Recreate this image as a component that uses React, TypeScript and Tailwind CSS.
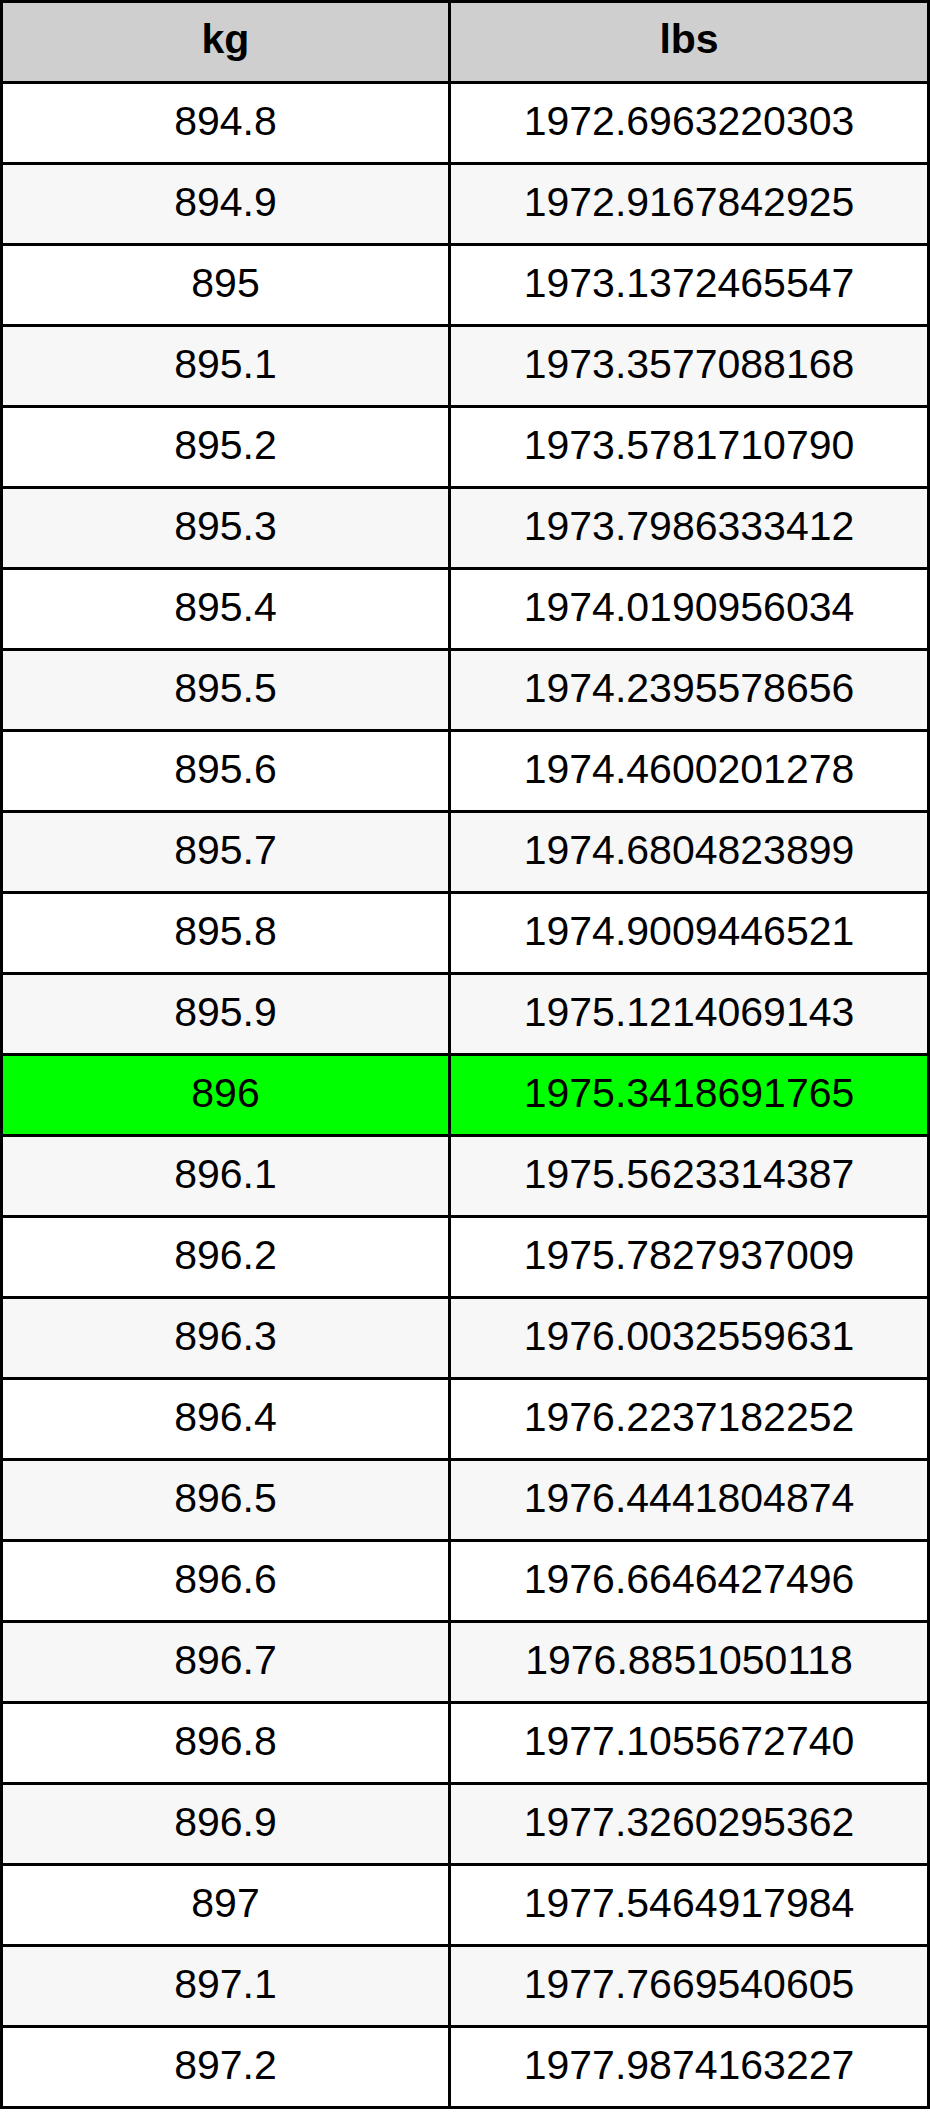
const rows: Array<[string, string]> = [
  ['894.8', '1972.6963220303'],
  ['894.9', '1972.9167842925'],
  ['895', '1973.1372465547'],
  ['895.1', '1973.3577088168'],
  ['895.2', '1973.5781710790'],
  ['895.3', '1973.7986333412'],
  ['895.4', '1974.0190956034'],
  ['895.5', '1974.2395578656'],
  ['895.6', '1974.4600201278'],
  ['895.7', '1974.6804823899'],
  ['895.8', '1974.9009446521'],
  ['895.9', '1975.1214069143'],
  ['896', '1975.3418691765'],
  ['896.1', '1975.5623314387'],
  ['896.2', '1975.7827937009'],
  ['896.3', '1976.0032559631'],
  ['896.4', '1976.2237182252'],
  ['896.5', '1976.4441804874'],
  ['896.6', '1976.6646427496'],
  ['896.7', '1976.8851050118'],
  ['896.8', '1977.1055672740'],
  ['896.9', '1977.3260295362'],
  ['897', '1977.5464917984'],
  ['897.1', '1977.7669540605'],
  ['897.2', '1977.9874163227'],
];

export default function App() {
  return (
    <div className="bg-white w-[930px] h-[2115px] font-['Liberation_Sans',Arial,sans-serif] text-black">
      <div className="grid grid-cols-[445px_476px] gap-[3px] bg-black p-[3px]">
        <div className="h-[78px] flex items-center justify-center bg-[#cfcfcf] font-bold text-[41px] pb-[5px]">kg</div>
        <div className="h-[78px] flex items-center justify-center bg-[#cfcfcf] font-bold text-[41px] pb-[5px]">lbs</div>
        {rows.map(([kg, lbs], i) => {
          const bg = kg === '896' ? 'bg-[#00ff00]' : i % 2 === 0 ? 'bg-white' : 'bg-[#f7f7f7]';
          return [
            <div key={kg + 'a'} className={`h-[78px] flex items-center justify-center text-[41px] pb-[3px] ${bg}`}>{kg}</div>,
            <div key={kg + 'b'} className={`h-[78px] flex items-center justify-center text-[41px] pb-[3px] ${bg}`}>{lbs}</div>,
          ];
        })}
      </div>
    </div>
  );
}
